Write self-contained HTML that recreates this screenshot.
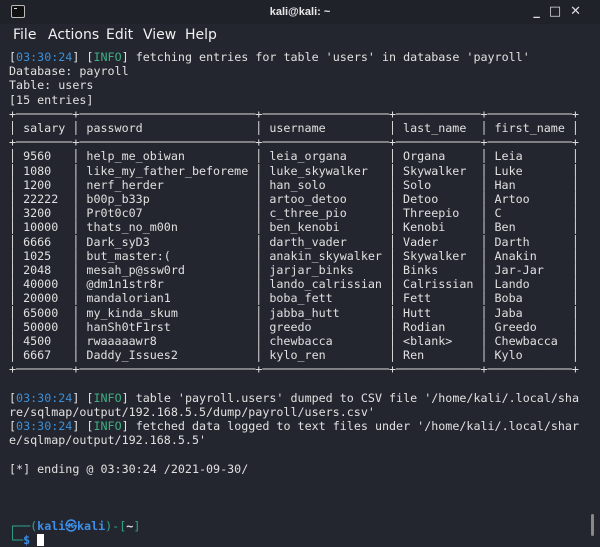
<!DOCTYPE html>
<html><head><meta charset="utf-8"><style>
html,body{margin:0;padding:0;width:600px;height:542px;overflow:hidden;background:#24262f;}
.win{position:absolute;left:0;top:0;width:600px;height:542px;background:#24262f;}
.title{position:absolute;left:0;top:0;width:600px;height:24px;background:#20222a;color:#e8e8e8;font:bold 11px "Liberation Sans",sans-serif;}
.title .t{position:absolute;left:0;right:0;top:6px;text-align:center;}
.icon{position:absolute;left:11px;top:5px;width:12px;height:11px;border:1px solid #bbb;border-radius:2px;background:#111;}
.icon:after{content:"";position:absolute;left:2px;top:2px;width:3px;height:1px;background:#ddd;}
.btns{position:absolute;right:10px;top:4px;color:#ddd;font:bold 13px "DejaVu Sans",sans-serif;letter-spacing:9px;}
.menu{position:absolute;left:0;top:24px;width:600px;height:24px;background:#24262f;color:#f0f0f0;font:14px "DejaVu Sans","Liberation Sans",sans-serif;}
.menu span{position:absolute;top:3px;}
pre{position:absolute;left:9px;top:50px;margin:0;font:11.7px/14.2px "DejaVu Sans Mono","Liberation Mono",monospace;color:#e0e0e0;}
.b{color:#3b8fd8}.g{color:#3fae83}
.p{color:#2fa58f}.k{color:#3d8ee8;font-weight:bold}
.cur{display:inline-block;width:7px;height:12px;background:#fff;vertical-align:-2px;}
.sb{position:absolute;left:591px;top:514px;width:3px;height:22px;background:#888;border-radius:2px;}
</style></head><body><div class="win">
<div class="title"><div class="icon"></div><div class="t">kali@kali: ~</div><div class="btns">_□✕</div></div>
<div class="menu"><span style="left:13px">File</span><span style="left:48px">Actions</span><span style="left:106px">Edit</span><span style="left:143px">View</span><span style="left:185px">Help</span></div>
<pre>[<span class="b">03:30:24</span>] [<span class="g">INFO</span>] fetching entries for table 'users' in database 'payroll'
Database: payroll
Table: users
[15 entries]
+────────+─────────────────────────+──────────────────+────────────+────────────+
│ salary │ password                │ username         │ last_name  │ first_name │
+────────+─────────────────────────+──────────────────+────────────+────────────+
│ 9560   │ help_me_obiwan          │ leia_organa      │ Organa     │ Leia       │
│ 1080   │ like_my_father_beforeme │ luke_skywalker   │ Skywalker  │ Luke       │
│ 1200   │ nerf_herder             │ han_solo         │ Solo       │ Han        │
│ 22222  │ b00p_b33p               │ artoo_detoo      │ Detoo      │ Artoo      │
│ 3200   │ Pr0t0c07                │ c_three_pio      │ Threepio   │ C          │
│ 10000  │ thats_no_m00n           │ ben_kenobi       │ Kenobi     │ Ben        │
│ 6666   │ Dark_syD3               │ darth_vader      │ Vader      │ Darth      │
│ 1025   │ but_master:(            │ anakin_skywalker │ Skywalker  │ Anakin     │
│ 2048   │ mesah_p@ssw0rd          │ jarjar_binks     │ Binks      │ Jar-Jar    │
│ 40000  │ @dm1n1str8r             │ lando_calrissian │ Calrissian │ Lando      │
│ 20000  │ mandalorian1            │ boba_fett        │ Fett       │ Boba       │
│ 65000  │ my_kinda_skum           │ jabba_hutt       │ Hutt       │ Jaba       │
│ 50000  │ hanSh0tF1rst            │ greedo           │ Rodian     │ Greedo     │
│ 4500   │ rwaaaaawr8              │ chewbacca        │ &lt;blank&gt;    │ Chewbacca  │
│ 6667   │ Daddy_Issues2           │ kylo_ren         │ Ren        │ Kylo       │
+────────+─────────────────────────+──────────────────+────────────+────────────+

[<span class="b">03:30:24</span>] [<span class="g">INFO</span>] table 'payroll.users' dumped to CSV file '/home/kali/.local/sha
re/sqlmap/output/192.168.5.5/dump/payroll/users.csv'
[<span class="b">03:30:24</span>] [<span class="g">INFO</span>] fetched data logged to text files under '/home/kali/.local/shar
e/sqlmap/output/192.168.5.5'

[*] ending @ 03:30:24 /2021-09-30/



<span class="p">┌──(</span><span class="k">kali㉿kali</span><span class="p">)-[</span><span style="font-weight:bold">~</span><span class="p">]</span>
<span class="p">└─</span><span class="k">$</span> <span class="cur"></span></pre>
<div class="sb"></div>
</div></body></html>
